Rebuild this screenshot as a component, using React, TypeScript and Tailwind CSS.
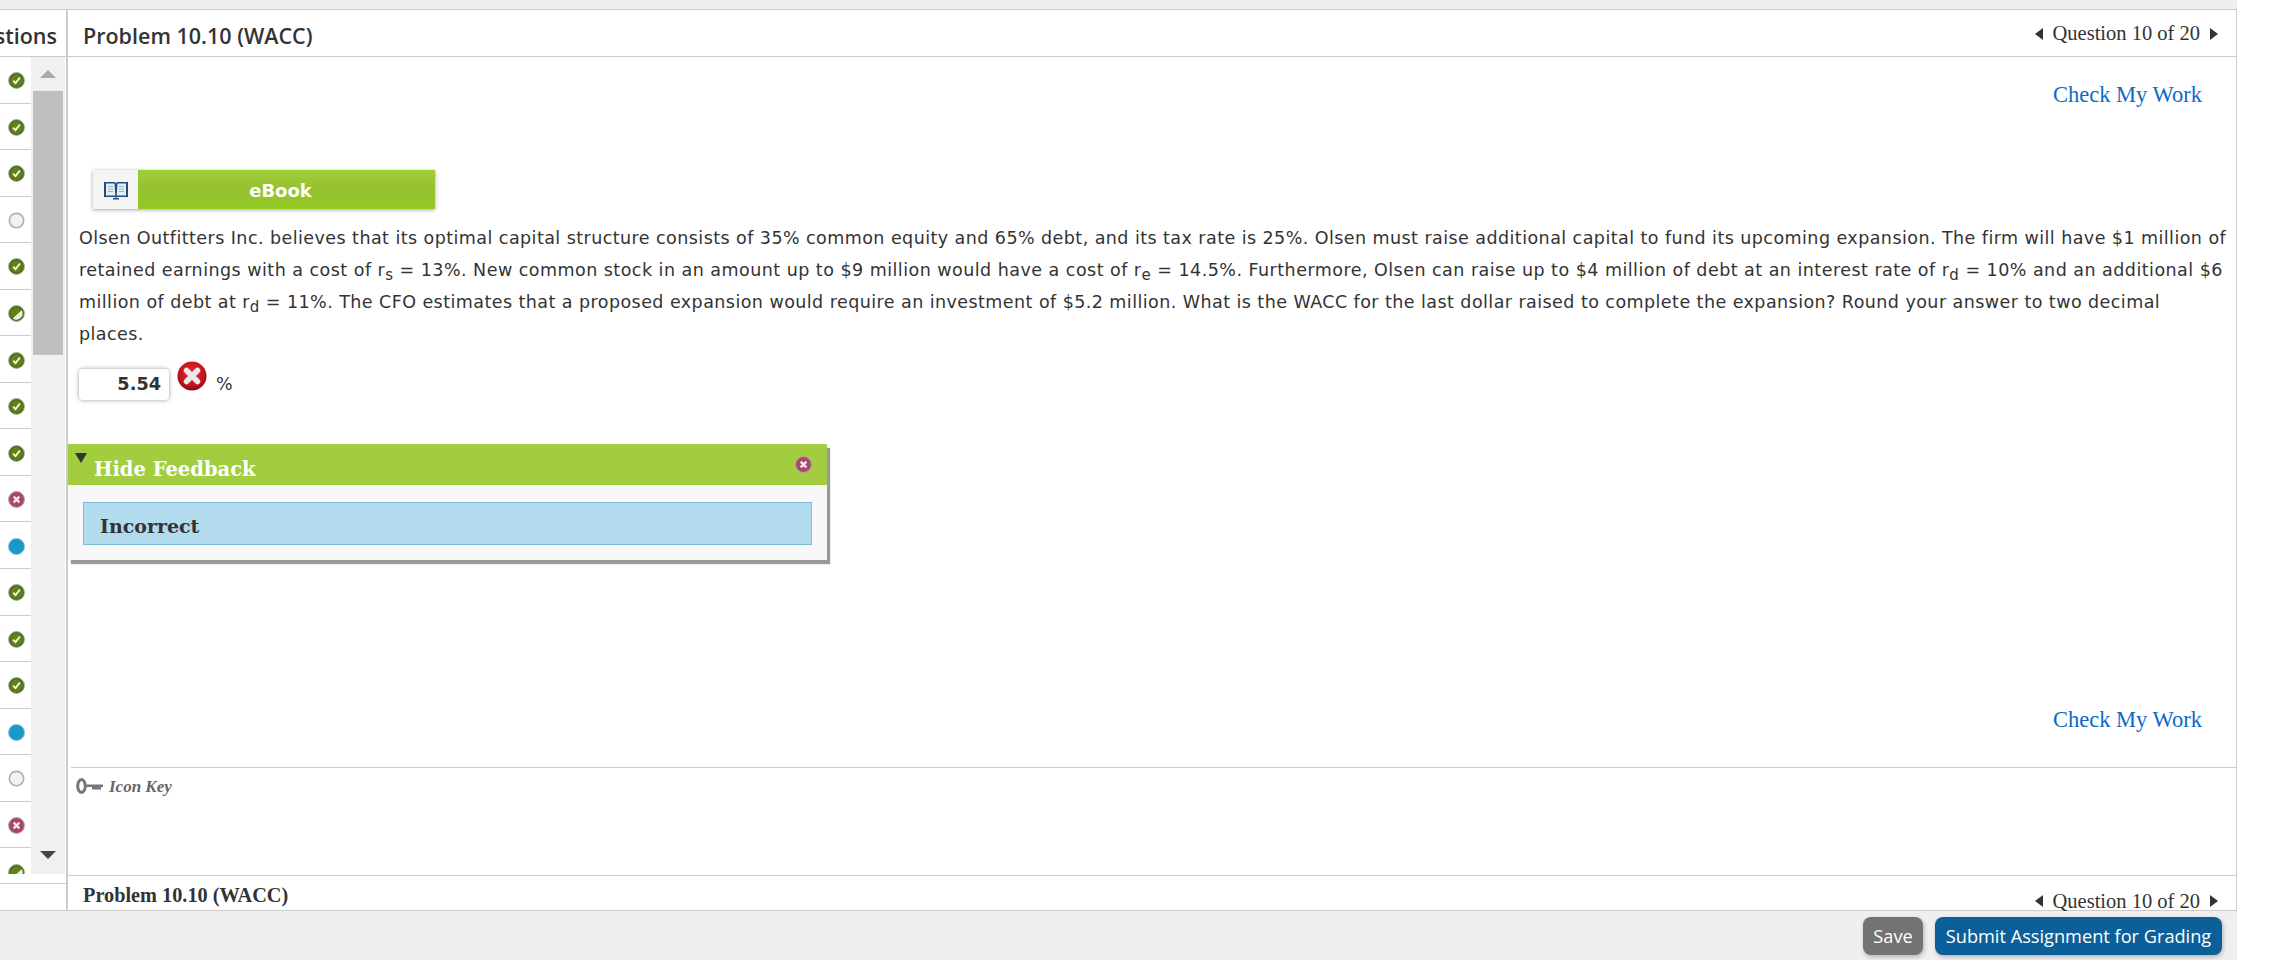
const sans = 'font-["Open_Sans",sans-serif]'

type Status = 'check' | 'empty' | 'partial' | 'wrong' | 'blue'

const statuses: Status[] = [
  'check', 'check', 'check', 'empty', 'check', 'partial', 'check', 'check', 'check',
  'wrong', 'blue', 'check', 'check', 'check', 'blue', 'empty', 'wrong', 'partial',
]

function StatusIcon({ status }: { status: Status }) {
  return (
    <svg width="17" height="17" viewBox="0 0 18 18" className="block">
      {status === 'check' && (
        <>
          <circle cx="9" cy="9" r="8.4" fill="#4f6a1c" stroke="#a9ad9f" strokeWidth="1" />
          <circle cx="9" cy="9" r="6.4" fill="#5f8314" />
          <path d="M5.5 9.3 L8 11.8 L12.6 5.8" fill="none" stroke="#f4f7e6" strokeWidth="2" />
        </>
      )}
      {status === 'partial' && (
        <>
          <circle cx="9" cy="9" r="8.4" fill="#4f6a1c" stroke="#a9ad9f" strokeWidth="1" />
          <circle cx="9" cy="9" r="6.4" fill="#5f8314" />
          <path d="M14.5 5.5 A6.6 6.6 0 0 1 5 14.2 Z" fill="#eef0e6" />
        </>
      )}
      {status === 'empty' && <circle cx="9" cy="9" r="7.6" fill="#f2f2f2" stroke="#b0b0b0" strokeWidth="1.7" />}
      {status === 'wrong' && (
        <>
          <circle cx="9" cy="9" r="8.4" fill="#a8476c" stroke="#b8a0a8" strokeWidth="1" />
          <path d="M6 6 L12 12 M12 6 L6 12" stroke="#f9e7ee" strokeWidth="2.4" />
        </>
      )}
      {status === 'blue' && <circle cx="9" cy="9" r="8.5" fill="#1b97c9" stroke="#8cc3da" strokeWidth="1" />}
    </svg>
  )
}

function QuestionNav({ className }: { className: string }) {
  return (
    <div className={`flex items-center gap-[10px] font-["Liberation_Serif",serif] text-[20.5px] text-[#333] ${className}`}>
      <span className="h-0 w-0 border-y-[6px] border-r-[8px] border-y-transparent border-r-[#333]" />
      <span>Question 10 of 20</span>
      <span className="h-0 w-0 border-y-[6px] border-l-[8px] border-y-transparent border-l-[#333]" />
    </div>
  )
}

function CheckMyWork({ className }: { className: string }) {
  return (
    <div className={`pr-[34px] text-right font-["Liberation_Serif",serif] text-[22.5px] leading-[24px] text-[#0a6ac6] ${className}`}>
      Check My Work
    </div>
  )
}

function Sub({ children }: { children: string }) {
  return <sub className="text-[15px] leading-none">{children}</sub>
}

export default function App() {
  return (
    <div className="flex h-[960px] w-[2237px] flex-col overflow-hidden bg-[#efefef] pt-[9px]">
      <div className="flex h-[902px] border-y border-r border-[#ccc] bg-white">
        {/* question list */}
        <aside className="flex w-[68px] shrink-0 flex-col border-r-2 border-[#ccc]">
          <div className={`flex h-[47px] shrink-0 items-center justify-end overflow-hidden border-b border-[#ccc] pt-[7px] pr-[9px] text-[21.5px] font-semibold whitespace-nowrap text-[#333] ${sans}`}>
            Questions
          </div>
          <div className="flex h-[817px] shrink-0">
            <ul className="h-full w-[31px] overflow-hidden">
              {statuses.map((status, i) => (
                <li key={i} className="flex h-[46.56px] items-center justify-center border-b border-[#ccc] pt-[2px] pl-[2px]">
                  <StatusIcon status={status} />
                </li>
              ))}
            </ul>
            <div className="flex w-[34px] flex-col items-center bg-[#f0f0f0]">
              <div className="flex h-[34px] w-full shrink-0 items-center justify-center">
                <span className="h-0 w-0 border-x-[8px] border-b-[8px] border-x-transparent border-b-[#aaa]" />
              </div>
              <div className="h-[264px] w-[30px] shrink-0 bg-[#bfbfbf]" />
              <div className="flex-1" />
              <div className="flex h-[38px] w-full shrink-0 items-center justify-center">
                <span className="h-0 w-0 border-x-[8px] border-t-[8px] border-x-transparent border-t-[#444]" />
              </div>
            </div>
          </div>
          <div className="mt-[9px] border-t border-[#ccc]" />
        </aside>

        {/* question body */}
        <main className="flex min-w-0 flex-1 flex-col">
          <header className="flex h-[47px] shrink-0 items-center justify-between border-b border-[#ccc] pr-[18px] pl-[15px]">
            <h1 className={`pt-[7px] text-[21.5px] font-semibold text-[#333] ${sans}`}>Problem 10.10 (WACC)</h1>
            <QuestionNav className="pt-[1px]" />
          </header>

          <div className="flex h-[710px] shrink-0 flex-col">
            <CheckMyWork className="mt-[26px]" />

            <div className="mt-[63px] ml-[25px] flex h-[39px] w-[342px] shrink-0 shadow-[0_1px_4px_rgba(0,0,0,0.35)]">
              <div className="flex w-[45px] shrink-0 items-center justify-center bg-[#f4f4f4]">
                <svg width="26" height="22" viewBox="0 0 26 22">
                  <path d="M1 3h10c1 0 2 .6 2 1.5C13 3.600 14 3 15 3h10v15H15c-1 0-2 .5-2 1-0-.5-1-1-2-1H1z" fill="#1d4f7e" />
                  <path d="M3 4.500h8.500L12.300 16.500H3zM23 4.500h-8.500L13.700 16.500H23z" fill="#e8eef3" />
                  <path d="M5 7.500h5M5 10h5M5 12.500h5M16 7.500h5M16 10h5M16 12.500h5" stroke="#9ab2c6" strokeWidth="1" />
                  <path d="M10 19h6v1.500h-6z" fill="#1d4f7e" />
                </svg>
              </div>
              <div className="flex flex-1 items-center justify-center bg-gradient-to-b from-[#a0cd38] via-[#96c12f] to-[#93c824] pt-[2px] pr-[12px] font-['DejaVu_Sans',sans-serif] text-[18px] font-bold text-white">
                eBook
              </div>
            </div>

            <p className="mt-[13px] ml-[11px] font-['DejaVu_Sans',sans-serif] text-[17.5px] leading-[32px] tracking-[0.44px] whitespace-nowrap text-[#333]">
              Olsen Outfitters Inc. believes that its optimal capital structure consists of 35% common equity and 65% debt, and its tax rate is 25%. Olsen must raise additional capital to fund its upcoming expansion. The firm will have $1 million of
              <br />
              <span className="tracking-[0.47px]">
                retained earnings with a cost of r<Sub>s</Sub> = 13%. New common stock in an amount up to $9 million would have a cost of r<Sub>e</Sub> = 14.5%. Furthermore, Olsen can raise up to $4 million of debt at an interest rate of r<Sub>d</Sub> = 10% and an additional $6
              </span>
              <br />
              million of debt at r<Sub>d</Sub> = 11%. The CFO estimates that a proposed expansion would require an investment of $5.2 million. What is the WACC for the last dollar raised to complete the expansion? Round your answer to two decimal
              <br />
              places.
            </p>

            <div className="mt-[11px] ml-[11px] flex items-start">
              <div className="mt-[8px] flex h-[31px] w-[90px] items-center justify-end rounded-[4px] bg-white pr-[8px] font-['DejaVu_Sans',sans-serif] text-[17.7px] font-bold text-[#333] shadow-[0_0_4px_rgba(0,0,0,0.4)]">
                5.54
              </div>
              <svg width="30" height="30" viewBox="0 0 30 30" className="ml-[8px]">
                <defs>
                  <radialGradient id="redBall" cx="0.5" cy="0.4" r="0.6">
                    <stop offset="0" stopColor="#e8303a" />
                    <stop offset="0.7" stopColor="#c4141c" />
                    <stop offset="1" stopColor="#8c0a10" />
                  </radialGradient>
                </defs>
                <circle cx="15" cy="15" r="14.500" fill="url(#redBall)" />
                <path d="M9.500 9.500 L20.500 20.500 M20.500 9.500 L9.500 20.500" stroke="#e9e9e9" strokeWidth="5.500" strokeLinecap="round" />
              </svg>
              <span className="mt-[12px] ml-[9px] font-['DejaVu_Sans',sans-serif] text-[17.5px] leading-[22px] text-[#333]">%</span>
            </div>

            <section className="mt-[44px] w-[759px] shrink-0 bg-[#f8f8f8] shadow-[3px_4px_1px_#999]">
              <div className="flex h-[41px] items-center justify-between bg-[#a2cd3f] pr-[15px]">
                <div className="flex items-start">
                  <span className="mt-[8px] ml-[7px] h-0 w-0 border-x-[6px] border-t-[10px] border-x-transparent border-t-[#333]" />
                  <span className="ml-[7px] pt-[10px] font-['DejaVu_Serif',serif] text-[19.5px] leading-[30px] font-bold text-white">Hide Feedback</span>
                </div>
                <StatusIcon status="wrong" />
              </div>
              <div className="px-[15px] pt-[17px] pb-[15px]">
                <div className="flex h-[43px] items-center border border-[#7fbadb] bg-[#b3dbee] px-[16px] pt-[5px] font-['DejaVu_Serif',serif] text-[19px] font-bold text-[#333]">
                  Incorrect
                </div>
              </div>
            </section>

            <CheckMyWork className="mt-[148px]" />
          </div>

          <div className="ml-[3px] flex h-[108px] shrink-0 items-start gap-[6px] border-t border-[#ccc] pt-[8px] pl-[5px]">
            <svg width="27" height="18" viewBox="0 0 27 18" className="mt-[1px]">
              <ellipse cx="5.500" cy="9" rx="3.800" ry="6.500" fill="none" stroke="#777" strokeWidth="3" />
              <path d="M9 7.500h18v2.500H9zM16 10h9v2.500h-9z" fill="#777" />
            </svg>
            <span className="font-['Liberation_Serif',serif] text-[17px] leading-[22px] font-bold text-[#666] italic">Icon Key</span>
          </div>

          <footer className="flex flex-1 items-center justify-between border-t border-[#ccc] pr-[18px] pl-[15px]">
            <span className="pb-[2px] font-['Liberation_Serif',serif] text-[20.3px] font-bold text-[#333]">Problem 10.10 (WACC)</span>
            <QuestionNav className="mt-[10px]" />
          </footer>
        </main>
      </div>

      <div className={`flex justify-end gap-[12px] pt-[6px] pr-[15px] text-[18.2px] text-white ${sans}`}>
        <button className="h-[38px] w-[60px] rounded-lg bg-[#737373] pt-[2px] shadow-[1px_2px_4px_rgba(0,0,0,0.25)]">Save</button>
        <button className="h-[38px] w-[287px] rounded-lg bg-[#0c5f99] pt-[2px] shadow-[1px_2px_4px_rgba(0,0,0,0.25)]">Submit Assignment for Grading</button>
      </div>
    </div>
  )
}
